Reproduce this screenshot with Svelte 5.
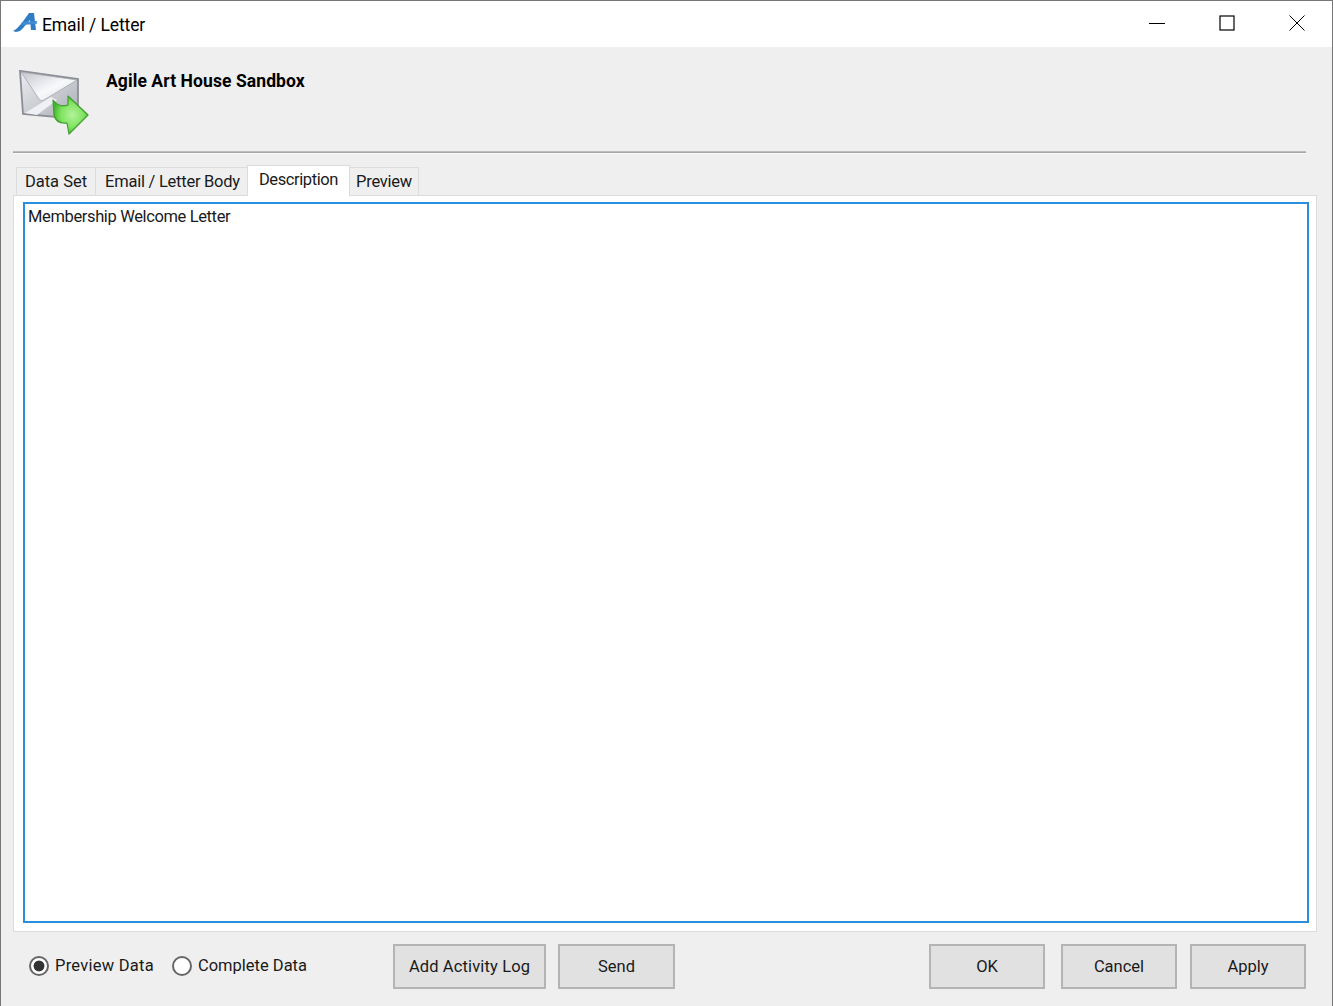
<script>
  const tabs = [
    { label: 'Data Set', active: false },
    { label: 'Email / Letter Body', active: false },
    { label: 'Description', active: true },
    { label: 'Preview', active: false }
  ];
  const description = 'Membership Welcome Letter';
</script>

<div class="window">
  <div class="titlebar">
    <svg class="app-icon" width="26" height="22" viewBox="0 0 26 22">
      <path d="M0 19 C6 16 11 8 16 1 L21 1 L23 18 L18 18 L17 8 C13 12 10 17 7 19 L3 20 Z" fill="#2f7cc4"/>
      <path d="M9 10 L24 9 L23.5 12 L8 13 Z" fill="#3f8cd2"/>
    </svg>
    <span class="title">Email / Letter</span>
    <div class="controls">
      <svg width="16" height="16" viewBox="0 0 16 16"><path d="M0 8.5H16" stroke="#000" fill="none"/></svg>
      <svg width="16" height="16" viewBox="0 0 16 16"><rect x="1" y="1" width="14" height="14" stroke="#000" fill="none" stroke-width="1.2"/></svg>
      <svg width="16" height="16" viewBox="0 0 16 16"><path d="M0.5 0.5L15.5 15.5M15.5 0.5L0.5 15.5" stroke="#000" fill="none"/></svg>
    </div>
  </div>

  <div class="body">
    <header class="head">
      <svg class="mail-icon" width="72" height="68" viewBox="0 0 72 68">
        <defs>
          <linearGradient id="env" x1="0" y1="0" x2="1" y2="1">
            <stop offset="0" stop-color="#eceef2"/>
            <stop offset="1" stop-color="#a9acb3"/>
          </linearGradient>
          <linearGradient id="flap" x1="0" y1="0" x2="1" y2="1">
            <stop offset="0" stop-color="#c4c6ce"/>
            <stop offset="0.55" stop-color="#f8f9fb"/>
            <stop offset="1" stop-color="#d6d8de"/>
          </linearGradient>
          <radialGradient id="arrow" cx="0.55" cy="0.5" r="0.55">
            <stop offset="0" stop-color="#b4f29c"/>
            <stop offset="0.6" stop-color="#7fe35f"/>
            <stop offset="1" stop-color="#3fb52c"/>
          </radialGradient>
        </defs>
        <path d="M1 2 L59 10 L59 50 L4 45 Z" fill="url(#env)" stroke="#8b8e95" stroke-width="1.8"/>
        <path d="M6 44 L32 28 L38 31 L18 46 Z" fill="#eef0f3"/>
        <path d="M2 3 L58 11 L25 31 Q22 33 20 30 Z" fill="url(#flap)" stroke="#a3a6ad" stroke-width="0.8"/>
        <path d="M34 31 Q40 39 49 36 L49 27 L69 46 L50 65 L48 54 Q37 55 35 46 Z" fill="url(#arrow)" stroke="#3f9e2e" stroke-width="1.2" stroke-linejoin="round"/>
      </svg>
      <h1>Agile Art House Sandbox</h1>
    </header>

    <div class="rule"></div>

    <div class="tabs">
      {#each tabs as tab}
        <div class="tab" class:active={tab.active}>{tab.label}</div>
      {/each}
    </div>

    <div class="panel">
      <div class="textbox">{description}</div>
    </div>

    <footer class="actions">
      <div class="radios">
        <label class="radio"><span class="dot on"></span><span class="first">Preview Data</span></label>
        <label class="radio"><span class="dot"></span><span>Complete Data</span></label>
      </div>
      <div class="group middle">
        <button class="wide">Add Activity Log</button>
        <button>Send</button>
      </div>
      <div class="group right">
        <button>OK</button>
        <button>Cancel</button>
        <button class="apply">Apply</button>
      </div>
    </footer>
  </div>
</div>

<style>
  :global(body) {
    margin: 0;
    background: #efefef;
  }

  .window {
    box-sizing: border-box;
    width: 1333px;
    height: 1006px;
    display: flex;
    flex-direction: column;
    border: 1px solid #777;
    border-bottom: none;
    font-family: Roboto, "Open Sans", sans-serif;
    font-size: 16.5px;
    color: #1a1a1a;
    overflow: hidden;
  }

  .titlebar {
    flex: 0 0 46px;
    display: flex;
    align-items: center;
    background: #fff;
    padding-left: 12px;
  }

  .app-icon {
    margin-right: 3px;
    margin-top: -3px;
    filter: blur(0.5px);
  }

  .title {
    font-size: 17.5px;
    color: #000;
    margin-top: 2px;
    letter-spacing: -0.1px;
  }

  .controls {
    margin-left: auto;
    display: flex;
    gap: 54px;
    padding-right: 27px;
    margin-top: -2px;
  }

  .body {
    flex: 1;
    display: flex;
    flex-direction: column;
    background: #efefef;
    padding: 0 15px 0 12px;
  }

  .head {
    height: 104px;
    display: flex;
    align-items: flex-start;
  }

  .mail-icon {
    margin: 22px 0 0 6px;
    filter: blur(0.4px);
  }

  .head h1 {
    margin: 24px 0 0 15px;
    font-size: 17.5px;
    font-weight: 700;
    letter-spacing: 0.09px;
    color: #000;
  }

  .rule {
    box-sizing: border-box;
    height: 3px;
    width: 1293px;
    background: #a6a6a6;
    border-top: 1px solid #bdbdbd;
    border-bottom: 1px solid #fbfbfb;
  }

  .tabs {
    display: flex;
    align-items: flex-end;
    height: 30px;
    margin-top: 11px;
    padding-left: 4px;
    position: relative;
    z-index: 1;
  }

  .tab {
    box-sizing: border-box;
    height: 28px;
    line-height: 27px;
    border: 1px solid #dcdcdc;
    border-bottom: none;
    margin-left: -1px;
    background: #efefef;
    white-space: nowrap;
    text-align: center;
    letter-spacing: -0.25px;
  }

  .tab:nth-child(1) {
    width: 80px;
    letter-spacing: 0;
  }

  .tab:nth-child(2) {
    width: 153px;
    padding-left: 2px;
  }

  .tab:nth-child(3) {
    width: 103px;
    letter-spacing: -0.4px;
  }

  .tab:nth-child(4) {
    width: 70px;
  }

  .tab.active {
    height: 31px;
    background: #fff;
    margin-bottom: -1px;
    z-index: 2;
  }

  .panel {
    box-sizing: border-box;
    width: 1304px;
    height: 737px;
    background: #fff;
    border: 1px solid #dcdcdc;
    padding: 6px 7px 8px 9px;
  }

  .textbox {
    box-sizing: border-box;
    height: 100%;
    border: 2px solid #2a8ede;
    padding: 1px 3px;
    line-height: 24px;
    letter-spacing: -0.37px;
  }

  .actions {
    display: flex;
    align-items: flex-start;
    padding-top: 12px;
  }

  .radios {
    display: flex;
    gap: 18px;
    width: 380px;
    padding: 9px 0 0 16px;
    box-sizing: border-box;
  }

  .radio {
    display: flex;
    align-items: center;
    gap: 6px;
    line-height: 24px;
  }

  .radio span:last-child {
    padding-top: 1px;
  }

  .first {
    letter-spacing: 0.25px;
  }

  .dot {
    box-sizing: border-box;
    width: 20px;
    height: 20px;
    border: 2px solid #666;
    border-radius: 50%;
    background: #fff;
  }

  .dot.on {
    background: radial-gradient(circle, #333 0 5px, #fff 5.8px);
  }

  .group {
    display: flex;
  }

  .middle {
    gap: 12px;
  }

  .right {
    margin-left: auto;
    margin-right: 11px;
  }

  .right button {
    width: 116px;
    margin-left: 16px;
  }

  .right button.apply {
    margin-left: 13px;
  }

  button {
    box-sizing: border-box;
    width: 117px;
    height: 45px;
    background: #e1e1e1;
    border: 2px solid #b4b4b4;
    font: inherit;
    color: #1a1a1a;
    padding: 0;
  }

  button.wide {
    width: 153px;
    letter-spacing: 0.13px;
  }
</style>
